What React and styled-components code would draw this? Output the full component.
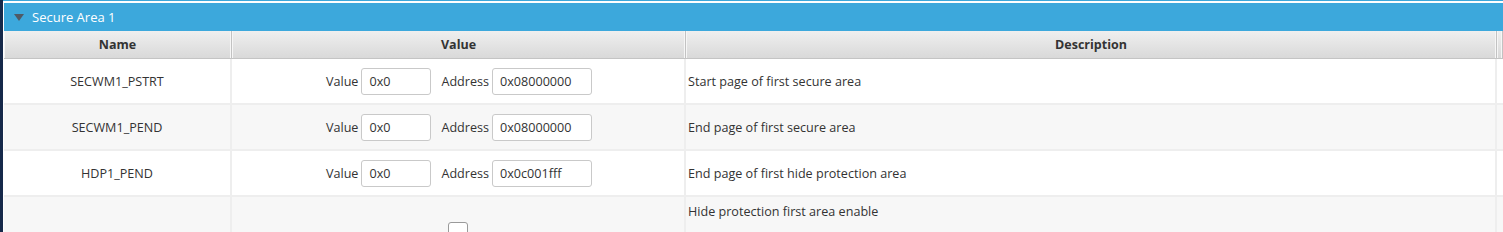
import styled, { createGlobalStyle } from "styled-components"

const GlobalStyle = createGlobalStyle`
  html, body {
    margin: 0;
    padding: 0;
    background: #ffffff;
    overflow: hidden;
  }
  body {
    font-family: "Open Sans", "Noto Sans", sans-serif;
    color: #333333;
  }
`

const rows = [
  { name: "SECWM1_PSTRT", value: "0x0", address: "0x08000000", desc: "Start page of first secure area" },
  { name: "SECWM1_PEND", value: "0x0", address: "0x08000000", desc: "End page of first secure area" },
  { name: "HDP1_PEND", value: "0x0", address: "0x0c001fff", desc: "End page of first hide protection area" },
]

const App = () => {
  return (
    <>
      <GlobalStyle />
      <Page>
        <SideStrip />
        <Panel>
          <TitleBar>
            <Arrow />
            <Title>Secure Area 1</Title>
          </TitleBar>
          <Table>
            <HeadRow>
              <HeadCell>Name</HeadCell>
              <HeadCell>Value</HeadCell>
              <HeadCell>Description</HeadCell>
              <HeadCell />
            </HeadRow>
            {rows.map((row, i) => (
              <Row key={row.name} $alt={i % 2 === 1}>
                <NameCell>{row.name}</NameCell>
                <ValueCell>
                  <Label>Value</Label>
                  <Field $w={70}>{row.value}</Field>
                  <Label $gap>Address</Label>
                  <Field $w={100}>{row.address}</Field>
                </ValueCell>
                <DescCell>{row.desc}</DescCell>
                <FillCell />
              </Row>
            ))}
            <Row $alt $tall>
              <NameCell />
              <CheckCell>
                <Check />
              </CheckCell>
              <DescCell $top>Hide protection first area enable</DescCell>
              <FillCell />
            </Row>
          </Table>
        </Panel>
      </Page>
    </>
  )
}

const Page = styled.div`
  display: flex;
  width: 1503px;
  height: 232px;
  overflow: hidden;
`
const SideStrip = styled.div`
  width: 3px;
  background: #16294a;
  flex-shrink: 0;
`
const Panel = styled.div`
  flex: 1;
  border-top: 1px solid #3ba7db;
  padding-top: 2px;
  padding-left: 1px;
  display: flex;
  flex-direction: column;
  & > * {
    flex-shrink: 0;
  }
`
const TitleBar = styled.div`
  height: 28px;
  background: #3ca8dc;
  display: flex;
  align-items: center;
  padding-left: 10px;
  gap: 8px;
`
const Arrow = styled.div`
  width: 0;
  height: 0;
  border-left: 5px solid transparent;
  border-right: 5px solid transparent;
  border-top: 7px solid #4f5a66;
  margin-top: 1px;
`
const Title = styled.span`
  color: #ffffff;
  font-size: 13px;
`
const cols = "228px 454px 811px 1fr"

const Table = styled.div`
  display: flex;
  flex-direction: column;
  & > * {
    flex-shrink: 0;
  }
`
const HeadRow = styled.div`
  display: grid;
  grid-template-columns: ${cols};
  height: 27px;
  background: linear-gradient(#efefef, #d9d9d9);
  border-bottom: 1px solid #c4c4c4;
`
const HeadCell = styled.div`
  display: flex;
  align-items: center;
  justify-content: center;
  font-weight: 700;
  font-size: 12.5px;
  color: #333;
  border-right: 1px solid #c2c2c2;
  box-shadow: inset -1px 0 0 #f6f6f6, inset 1px 0 0 #f6f6f6;
`
const Row = styled.div`
  display: grid;
  grid-template-columns: ${cols};
  height: ${p => (p.$tall ? "60px" : "44px")};
  background: ${p => (p.$alt ? "#f7f7f7" : "#ffffff")};
  border-bottom: 2px solid #eeeeee;
`
const Cell = styled.div`
  display: flex;
  align-items: center;
  font-size: 12.6px;
  color: #333;
  border-right: 2px solid #eeeeee;
`
const NameCell = styled(Cell)`
  justify-content: center;
`
const ValueCell = styled(Cell)`
  justify-content: center;
  padding-left: 2px;
`
const CheckCell = styled(Cell)`
  justify-content: center;
  align-items: flex-start;
  padding-top: 25px;
`
const DescCell = styled(Cell)`
  padding-left: 2px;
  align-items: ${p => (p.$top ? "flex-start" : "center")};
  padding-top: ${p => (p.$top ? "6px" : "0")};
`
const FillCell = styled(Cell)`
  border-right: none;
`
const Label = styled.span`
  margin-left: ${p => (p.$gap ? "10px" : "0")};
  margin-right: 3px;
`
const Field = styled.div`
  width: ${p => p.$w}px;
  height: 27px;
  box-sizing: border-box;
  border: 1px solid #c9c9c9;
  border-radius: 3px;
  background: #fff;
  display: flex;
  align-items: center;
  padding-left: 7px;
  color: #333;
`
const Check = styled.div`
  width: 20px;
  height: 20px;
  box-sizing: border-box;
  border: 1px solid #9a9a9a;
  border-radius: 3px;
  background: #fff;
`

export default App
